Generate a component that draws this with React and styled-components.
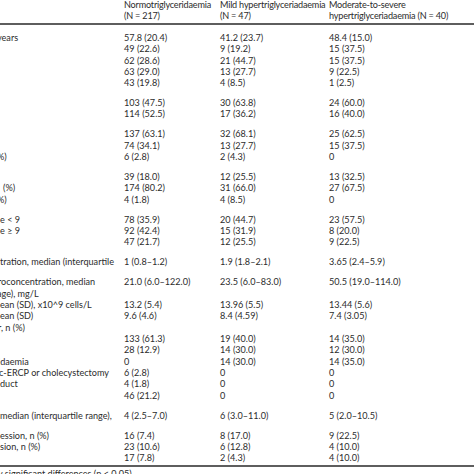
import React from 'react'
import styled, { createGlobalStyle } from 'styled-components'

const GlobalStyle = createGlobalStyle`
    html, body {
        margin: 0;
        padding: 0;
        background: #ffffff;
        overflow: hidden;
    }
    body {
        font-family: Lato, "Open Sans", sans-serif;
        font-size: 9.1px;
        color: #2c2c2c;
    }
`

const rows = [
    { label: 'years', shift: -3, values: ['57.8 (20.4)', '41.2 (23.7)', '48.4 (15.0)'] },
    { values: ['49 (22.6)', '9 (19.2)', '15 (37.5)'] },
    { values: ['62 (28.6)', '21 (44.7)', '15 (37.5)'] },
    { values: ['63 (29.0)', '13 (27.7)', '9 (22.5)'] },
    { values: ['43 (19.8)', '4 (8.5)', '1 (2.5)'] },
    { gap: true },
    { values: ['103 (47.5)', '30 (63.8)', '24 (60.0)'] },
    { values: ['114 (52.5)', '17 (36.2)', '16 (40.0)'] },
    { gap: true },
    { values: ['137 (63.1)', '32 (68.1)', '25 (62.5)'] },
    { values: ['74 (34.1)', '13 (27.7)', '15 (37.5)'] },
    { label: '%)', shift: -3, values: ['6 (2.8)', '2 (4.3)', '0'] },
    { gap: true },
    { values: ['39 (18.0)', '12 (25.5)', '13 (32.5)'] },
    { label: '(%)', shift: 3, values: ['174 (80.2)', '31 (66.0)', '27 (67.5)'] },
    { label: '%)', shift: -3, values: ['4 (1.8)', '4 (8.5)', '0'] },
    { gap: true },
    { label: 'e < 9', shift: 0, values: ['78 (35.9)', '20 (44.7)', '23 (57.5)'] },
    { label: 'e ≥ 9', shift: 0, values: ['92 (42.4)', '15 (31.9)', '8 (20.0)'] },
    { values: ['47 (21.7)', '12 (25.5)', '9 (22.5)'] },
    { gap: true },
    { label: 'tration, median (interquartile', shift: 0, values: ['1 (0.8–1.2)', '1.9 (1.8–2.1)', '3.65 (2.4–5.9)'] },
    { gap: true },
    { label: 'roconcentration, median', shift: -2, values: ['21.0 (6.0–122.0)', '23.5 (6.0–83.0)', '50.5 (19.0–114.0)'] },
    { label: 'age), mg/L', shift: -3, values: [] },
    { label: 'ean (SD), x10^9 cells/L', shift: 0, values: ['13.2 (5.4)', '13.96 (5.5)', '13.44 (5.6)'] },
    { label: 'ean (SD)', shift: 0, values: ['9.6 (4.6)', '8.4 (4.59)', '7.4 (3.05)'] },
    { label: 'r, n (%)', shift: -2, values: [] },
    { values: ['133 (61.3)', '19 (40.0)', '14 (35.0)'] },
    { values: ['28 (12.9)', '14 (30.0)', '12 (30.0)'] },
    { label: 'ldaemia', shift: -2, values: ['0', '14 (30.0)', '14 (35.0)'] },
    { label: 'c-ERCP or cholecystectomy', shift: -1, values: ['6 (2.8)', '0', '0'] },
    { label: 'duct', shift: 0, values: ['4 (1.8)', '0', '0'] },
    { values: ['46 (21.2)', '0', '0'] },
    { gap: true },
    { label: 'median (interquartile range),', shift: 0, values: ['4 (2.5–7.0)', '6 (3.0–11.0)', '5 (2.0–10.5)'] },
    { gap: true },
    { label: 'ession, n (%)', shift: 0, values: ['16 (7.4)', '8 (17.0)', '9 (22.5)'] },
    { label: 'sion, n (%)', shift: 0, values: ['23 (10.6)', '6 (12.8)', '4 (10.0)'] },
    { values: ['17 (7.8)', '2 (4.3)', '4 (10.0)'] },
]

const App = () => {
    return (
        <>
            <GlobalStyle />
            <Table>
                <Header>
                    <Cell />
                    <HeadCell>Normotriglyceridaemia<br />(N = 217)</HeadCell>
                    <HeadCell>Mild hypertriglyceriadaemia<br />(N = 47)</HeadCell>
                    <HeadCell>Moderate-to-severe<br />hypertriglyceriadaemia (N = 40)</HeadCell>
                </Header>
                <Body>
                    {rows.map((row, i) =>
                        row.gap ? <Gap key={i} /> : (
                            <Row key={i}>
                                <LabelCell>
                                    {row.label && <LabelText $shift={row.shift}>{row.label}</LabelText>}
                                </LabelCell>
                                <Cell>{row.values[0]}</Cell>
                                <Cell>{row.values[1]}</Cell>
                                <Cell>{row.values[2]}</Cell>
                            </Row>
                        )
                    )}
                </Body>
                <Footnote>y significant differences (p &lt; 0.05).</Footnote>
            </Table>
        </>
    )
}

const Table = styled.div`
    width: 474px;
    display: flex;
    flex-direction: column;
`

const columns = '124px 96px 109px 1fr'

const Header = styled.div`
    display: grid;
    grid-template-columns: ${columns};
    line-height: 11.4px;
    margin-top: -1px;
    padding-bottom: 1px;
    border-bottom: 2px solid #5e5e5e;
`

const HeadCell = styled.div`
    white-space: nowrap;
    letter-spacing: -0.2px;
`

const Body = styled.div`
    padding: 7px 0 1px;
    border-bottom: 2px solid #5e5e5e;
`

const Row = styled.div`
    display: grid;
    grid-template-columns: ${columns};
    height: 11.35px;
    line-height: 11.35px;
`

const Gap = styled.div`
    height: 8.6px;
`

const Cell = styled.div`
    white-space: nowrap;
`

const LabelCell = styled.div`
    overflow: hidden;
    white-space: nowrap;
`

const LabelText = styled.span`
    display: inline-block;
    margin-left: ${p => p.$shift || 0}px;
`

const Footnote = styled.div`
    line-height: 11px;
    padding-top: 1px;
    margin-left: -2px;
    white-space: nowrap;
`

export default App
